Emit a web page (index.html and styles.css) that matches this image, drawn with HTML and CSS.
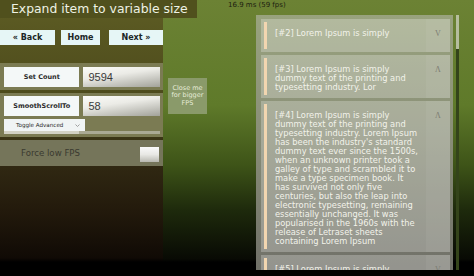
FILE: index.html
```html
<!DOCTYPE html>
<html lang="en">
<head>
    <meta charset="UTF-8">
    <meta name="viewport" content="width=device-width, initial-scale=1.0">
    <title>Expand item to variable size</title>
    <link rel="stylesheet" href="styles.css">
</head>
<body>
    <div class="app">
        <div class="side">
            <div class="title">Expand item to variable size</div>
            <div class="nav">
                <button class="nav-btn back-btn">&laquo; Back</button>
                <button class="nav-btn home-btn">Home</button>
                <button class="nav-btn next-btn">Next &raquo;</button>
            </div>

            <div class="box count-box">
                <div class="row">
                    <button class="act-btn">Set Count</button>
                    <div class="field">9594</div>
                </div>
            </div>

            <div class="box scroll-box">
                <div class="row">
                    <button class="act-btn">SmoothScrollTo</button>
                    <div class="field">58</div>
                </div>
                <div class="dropdown">
                    <span>Toggle Advanced</span>
                    <svg width="5" height="3" viewBox="0 0 5 3"><path d="M0.5 0.5 L2.5 2.5 L4.5 0.5" fill="none" stroke="#8a8a8a" stroke-width="0.8"/></svg>
                </div>
                <div class="strip"></div>
            </div>

            <div class="box fps-box">
                <span class="fps-label">Force low FPS</span>
                <div class="check"></div>
            </div>
        </div>

        <div class="main">
            <div class="close-me">Close me<br>for bigger<br>FPS</div>
            <div class="list-col">
                <div class="fps">16.9 ms (59 fps)</div>
                <div class="list-wrap">
                    <div class="list">
                        <div class="item short">
                            <div class="bar"></div>
                            <div class="text">[#2] Lorem Ipsum is simply</div>
                            <div class="toggle">V</div>
                        </div>
                        <div class="item">
                            <div class="bar"></div>
                            <div class="text">[#3] Lorem Ipsum is simply<br>dummy text of the printing and<br>typesetting industry. Lor</div>
                            <div class="toggle">&Lambda;</div>
                        </div>
                        <div class="item">
                            <div class="bar"></div>
                            <div class="text">[#4] Lorem Ipsum is simply<br>dummy text of the printing and<br>typesetting industry. Lorem Ipsum<br>has been the industry's standard<br>dummy text ever since the 1500s,<br>when an unknown printer took a<br>galley of type and scrambled it to<br>make a type specimen book. It<br>has survived not only five<br>centuries, but also the leap into<br>electronic typesetting, remaining<br>essentially unchanged. It was<br>popularised in the 1960s with the<br>release of Letraset sheets<br>containing Lorem Ipsum</div>
                            <div class="toggle">&Lambda;</div>
                        </div>
                        <div class="item">
                            <div class="bar"></div>
                            <div class="text">[#5] Lorem Ipsum is simply</div>
                            <div class="toggle">V</div>
                        </div>
                    </div>
                    <div class="scrollbar"><div class="thumb"></div></div>
                </div>
            </div>
        </div>
    </div>
</body>
</html>
```

FILE: styles.css
```css
body {
    margin: 0;
    background-color: #000;
    font-family: "DejaVu Sans", sans-serif;
}
.app {
    display: flex;
    height: 276px;
    width: 474px;
    background: linear-gradient(to bottom, #6c8234 0px, #5f7a2a 105px, #3e5418 165px, #1e2a0c 210px, #080a04 259px, #000 262px);
}
.side {
    width: 163px;
    flex-shrink: 0;
    background: linear-gradient(to bottom, #5e5d24 0px, #4d4b1c 92px, #302812 166px, #231a0c 210px, #100a05 258px, #000 262px);
}
.title {
    width: 186px;
    height: 18px;
    padding-left: 11px;
    line-height: 18px;
    font-size: 12.4px;
    color: #eef2e4;
    background-color: #50501d;
    white-space: nowrap;
}
.nav {
    display: flex;
    margin-top: 12px;
    height: 15px;
}
.nav-btn {
    height: 15px;
    padding: 0;
    border: none;
    background-color: #e6f6f6;
    color: #1c2626;
    font-family: "DejaVu Sans", sans-serif;
    font-weight: bold;
    font-size: 8px;
}
.back-btn {
    width: 55px;
}
.home-btn {
    width: 39px;
    margin-left: 6px;
}
.next-btn {
    width: 54px;
    margin-left: 9px;
}
.box {
    background-color: #7b7b53;
}
.count-box {
    margin-top: 18px;
    padding: 4px 3px 3px 4px;
}
.scroll-box {
    margin-top: 3px;
    padding: 3px 3px 3px 4px;
}
.row {
    display: flex;
    gap: 4px;
    height: 20px;
}
.act-btn {
    width: 76px;
    height: 20px;
    padding: 0;
    border: none;
    background-color: #f4f8f8;
    color: #2a2a2a;
    font-family: "DejaVu Sans", sans-serif;
    font-weight: bold;
    font-size: 6.5px;
}
.field {
    width: 72px;
    height: 20px;
    padding-left: 5px;
    line-height: 20px;
    font-family: "Liberation Sans", sans-serif;
    font-size: 11px;
    color: #3a3a3a;
    background: linear-gradient(172deg, #fbfbf8 0%, #ebebe6 40%, #a2a29a 100%);
}
.dropdown {
    display: flex;
    align-items: center;
    justify-content: space-between;
    width: 64px;
    height: 12px;
    margin-top: 3px;
    padding: 0 5px 0 12px;
    background-color: #f0f4f4;
    font-size: 5.6px;
    color: #2a2a2a;
}
.strip {
    height: 3px;
    background: linear-gradient(to right, #d2d2c4 0%, #d2d2c4 48%, #aaaa94 48%);
}
.fps-box {
    display: flex;
    align-items: center;
    justify-content: space-between;
    margin-top: 3px;
    height: 26px;
    padding: 0 4px 0 21px;
    background-color: #75755a;
}
.fps-label {
    font-size: 8.6px;
    color: #3a3a30;
}
.check {
    width: 19px;
    height: 15px;
    margin-top: 3px;
    background: linear-gradient(to bottom, #fafafa 0%, #e8e8e4 50%, #b8b8b0 100%);
}
.main {
    display: flex;
    flex: 1;
}
.close-me {
    width: 39px;
    height: 36px;
    margin: 78px 0 0 5px;
    display: flex;
    align-items: center;
    justify-content: center;
    text-align: center;
    font-size: 6.5px;
    line-height: 7.5px;
    color: #e6ecd8;
    background-color: #8a9a6a;
}
.list-col {
    margin-left: 21px;
}
.fps {
    height: 10px;
    padding-top: 1px;
    font-size: 7px;
    line-height: 8px;
    color: #1c1e10;
    white-space: nowrap;
}
.list-wrap {
    display: flex;
    margin: 4px 0 0 28px;
}
.list {
    width: 189px;
    height: 251px;
    padding: 4px 3px 0 5px;
    display: flex;
    flex-direction: column;
    gap: 3px;
    overflow: hidden;
    background: linear-gradient(to bottom, #99a37e 0%, #8a8f78 45%, #707068 100%);
}
.item {
    display: flex;
    flex-shrink: 0;
    background-color: rgba(255, 255, 255, 0.25);
}
.item.short {
    min-height: 33px;
}
.bar {
    width: 3px;
    margin: 3px 0 3px 3px;
    background-color: #f2d6b0;
    flex-shrink: 0;
}
.text {
    flex: 1;
    padding: 10px 0 6px 8px;
    font-size: 8.3px;
    line-height: 9px;
    color: #f2f2ea;
    white-space: nowrap;
}
.toggle {
    width: 24px;
    flex-shrink: 0;
    padding-top: 10px;
    text-align: center;
    font-family: "Liberation Serif", serif;
    font-size: 8px;
    line-height: 9px;
    color: #7c7c72;
    background-color: rgba(255, 255, 255, 0.05);
}
.scrollbar {
    width: 3px;
    height: 255px;
    margin-left: 3px;
    background-color: #34441a;
}
.thumb {
    height: 34px;
    background-color: #b6be9e;
}
```
